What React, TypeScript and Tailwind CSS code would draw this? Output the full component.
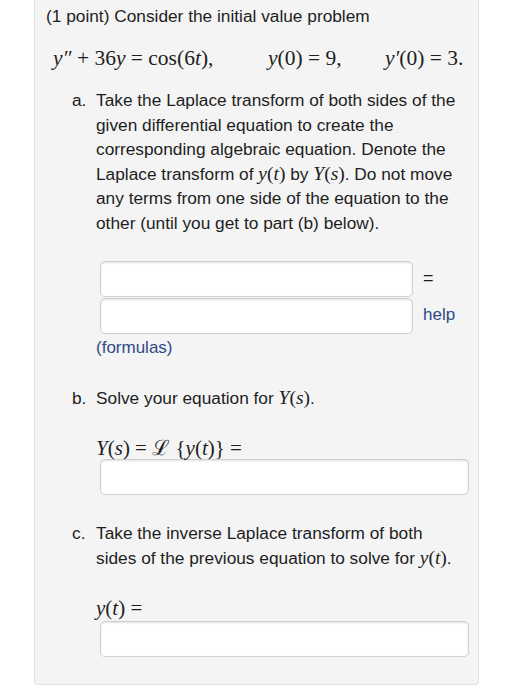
import React from 'react'

function M({ children }: { children: React.ReactNode }) {
  return <span className="font-['Liberation_Serif',serif] text-[19.5px]">{children}</span>
}

function I({ children }: { children: React.ReactNode }) {
  return <i>{children}</i>
}

function Box({ className }: { className: string }) {
  return (
    <div
      className={`h-[36px] rounded-[5px] border border-[#cfcfcf] bg-white shadow-[inset_0_1px_2px_rgba(0,0,0,0.12)] ${className}`}
    />
  )
}

export default function App() {
  return (
    <div className="min-h-[700px] bg-white text-[#1e1e1e] font-['Liberation_Sans',Arial,sans-serif]">
      <div className="ml-[34px] w-[445px] rounded-b-[4px] border border-t-0 border-[#e2e2e2] bg-[#f4f4f4] pb-[27px] pl-[11px] pr-[8px]">
        <div className="pt-[4px] text-[17.3px] leading-[24px]">(1 point) Consider the initial value problem</div>

        <div className="mt-[16px] flex pl-[7px] font-['Liberation_Serif',serif] text-[21.5px] leading-[28px] whitespace-nowrap">
          <span className="w-[215px]">
            <I>y″</I> + 36<I>y</I> = cos(6<I>t</I>),
          </span>
          <span className="w-[117px]">
            <I>y</I>(0) = 9,
          </span>
          <span>
            <I>y′</I>(0) = 3.
          </span>
        </div>

        {/* part a */}
        <div className="mt-[16px] flex pl-[26px] text-[17.3px] leading-[24.6px]">
          <span className="w-[24px]">a.</span>
          <div className="flex-1">
            <div className="whitespace-nowrap">
              Take the Laplace transform of both sides of the
              <br />
              given differential equation to create the
              <br />
              corresponding algebraic equation. Denote the
              <br />
              Laplace transform of <M><I>y</I>(<I>t</I>)</M> by <M><I>Y</I>(<I>s</I>)</M>. Do not move
              <br />
              any terms from one side of the equation to the
              <br />
              other (until you get to part (b) below).
            </div>

            <div className="mt-[25px] flex">
              <div className="ml-[4px] flex flex-col gap-[1px]">
                <Box className="w-[313px]" />
                <Box className="w-[313px]" />
              </div>
              <div className="ml-[10px] flex flex-col gap-[1px]">
                <div className="flex h-[36px] items-center text-[18px]">=</div>
                <div className="flex h-[36px] items-center text-[17px] text-[#2f4a86]">help</div>
              </div>
            </div>
            <div className="mt-[2px] text-[17px] leading-[24px] text-[#2f4a86]">(formulas)</div>
          </div>
        </div>

        {/* part b */}
        <div className="mt-[26px] flex pl-[26px] text-[17.3px] leading-[24.6px]">
          <span className="w-[24px]">b.</span>
          <div className="flex-1">
            <div>
              Solve your equation for <M><I>Y</I>(<I>s</I>)</M>.
            </div>
            <div className="mt-[28px] font-['Liberation_Serif',serif] text-[21px] leading-[20px]">
              <I>Y</I>(<I>s</I>) = ℒ {'{'}<I>y</I>(<I>t</I>){'}'} =
            </div>
            <Box className="ml-[4px] mt-[1px] w-[369px]" />
          </div>
        </div>

        {/* part c */}
        <div className="mt-[26px] flex pl-[26px] text-[17.3px] leading-[24.6px]">
          <span className="w-[24px]">c.</span>
          <div className="flex-1">
            <div className="whitespace-nowrap">
              Take the inverse Laplace transform of both
              <br />
              sides of the previous equation to solve for <M><I>y</I>(<I>t</I>)</M>.
            </div>
            <div className="mt-[28px] font-['Liberation_Serif',serif] text-[21px] leading-[20px]">
              <I>y</I>(<I>t</I>) =
            </div>
            <Box className="ml-[4px] mt-[3px] w-[369px]" />
          </div>
        </div>
      </div>
    </div>
  )
}
